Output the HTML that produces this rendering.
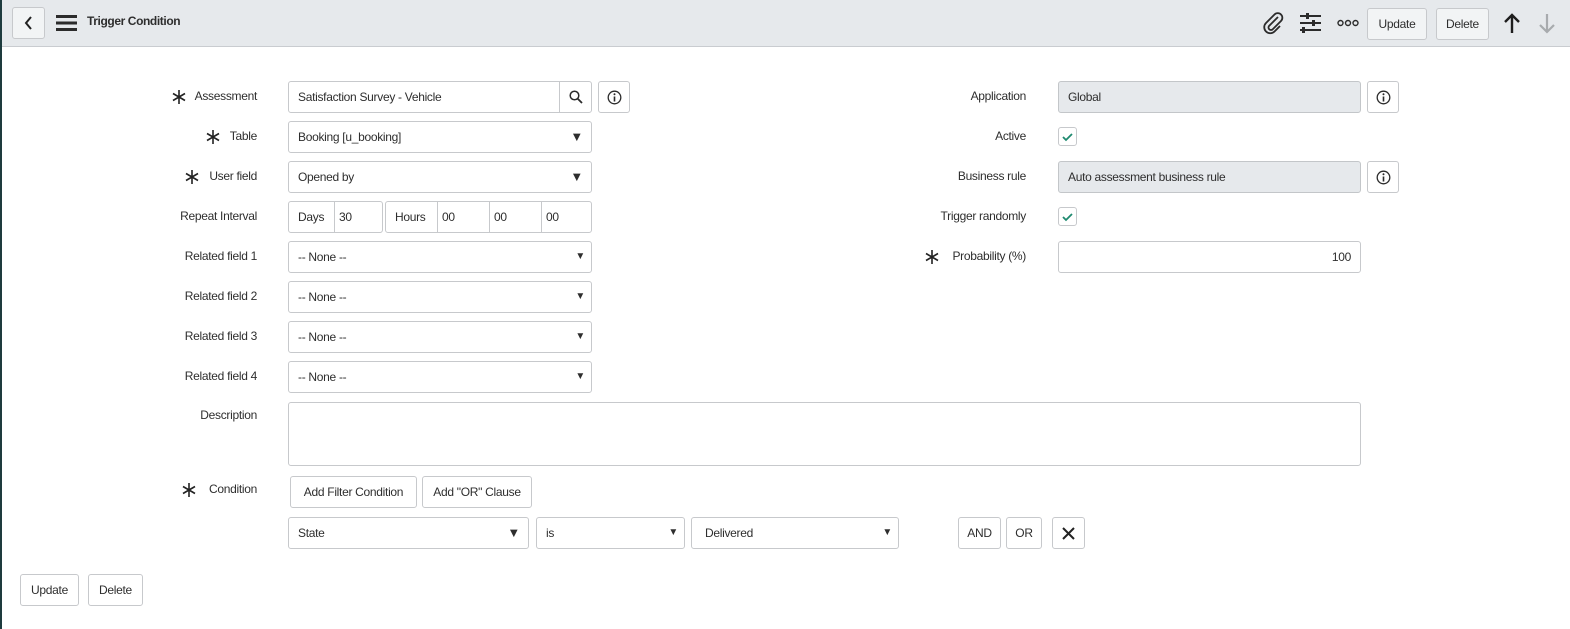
<!DOCTYPE html>
<html><head><meta charset="utf-8"><style>
*{box-sizing:border-box;margin:0;padding:0}
body{width:1570px;height:629px;background:#fff;font-family:"Liberation Sans",sans-serif;font-size:12px;color:#2e2e2e;position:relative;overflow:hidden;letter-spacing:-0.3px}
.a{position:absolute}
.hdr{left:0;top:0;width:1570px;height:47px;background:#e6e9ec;border-bottom:1px solid #c9ccd0}
.edge{left:0;top:0;width:2px;height:629px;background:#1e3b3e;z-index:5}
.box{position:absolute;border:1px solid #c7c9cc;border-radius:3px;background:#fff;height:32px;line-height:30px;padding-left:9px}
.ro{background:#e6e9ec;border-color:#c3c6c9}
.btn{position:absolute;border:1px solid #c7c9cc;border-radius:3px;background:#fff;height:32px;line-height:30px;text-align:center;color:#2e2e2e}
.hbtn{background:#f2f4f5}
.lbl,.lbl2{position:absolute;text-align:right;width:200px;height:32px;line-height:30px}
.star{position:absolute;width:14px;height:14px}
.arr{position:absolute;right:8px;top:0;font-size:13px}
.arrs{position:absolute;right:6px;top:0;font-size:10px}
.chk{position:absolute;width:19px;height:19px;border:1px solid #c7c9cc;border-radius:3px;background:#fff}
.seg{position:absolute;top:0;height:30px;border-left:1px solid #c7c9cc;padding-left:4px}
</style></head><body>
<svg width="0" height="0" style="position:absolute"><defs><symbol id="st" viewBox="0 0 14 14"><path d="M7 0v14M1 3.5l12 7M13 3.5l-12 7" stroke="#222" stroke-width="1.6"/></symbol></defs></svg>
<div class="a edge"></div>
<div class="a hdr"></div>
<div class="btn hbtn" style="left:12px;top:7px;width:33px;height:32px"><svg width="12" height="14" viewBox="0 0 12 14" style="margin-top:8px"><path d="M8 1L3 7l5 6" stroke="#222" stroke-width="2" fill="none"/></svg></div>
<svg class="a" style="left:56px;top:15px" width="21" height="16"><rect y="0" width="21" height="3" fill="#2b2b2b"/><rect y="6.5" width="21" height="3" fill="#2b2b2b"/><rect y="13" width="21" height="3" fill="#2b2b2b"/></svg>
<div class="a" style="left:87px;top:14px;font-weight:bold;font-size:12px;letter-spacing:-0.4px">Trigger Condition</div>
<svg class="a" style="left:1262px;top:11px" width="22" height="24" viewBox="0 0 22 24"><path d="M16 6L7 15a2.5 2.5 0 0 0 3.5 3.5L19 10a4.5 4.5 0 0 0-6.5-6.5L4 12a6 6 0 0 0 8.5 8.5L18 15" stroke="#2b2b2b" stroke-width="1.8" fill="none"/></svg>
<svg class="a" style="left:1300px;top:12px" width="21" height="22"><path d="M0 4h21M0 11h21M0 18h21" stroke="#2b2b2b" stroke-width="2"/><rect x="6" y="1" width="3" height="6" fill="#2b2b2b"/><rect x="12" y="8" width="3" height="6" fill="#2b2b2b"/><rect x="2" y="15" width="3" height="6" fill="#2b2b2b"/></svg>
<svg class="a" style="left:1337px;top:19px" width="22" height="8"><circle cx="3.5" cy="4" r="2.5" stroke="#2b2b2b" stroke-width="1.4" fill="none"/><circle cx="11" cy="4" r="2.5" stroke="#2b2b2b" stroke-width="1.4" fill="none"/><circle cx="18.5" cy="4" r="2.5" stroke="#2b2b2b" stroke-width="1.4" fill="none"/></svg>
<div class="btn hbtn" style="left:1367px;top:8px;width:60px">Update</div>
<div class="btn hbtn" style="left:1436px;top:8px;width:53px">Delete</div>
<svg class="a" style="left:1503px;top:13px" width="18" height="21"><path d="M9 20V2M2 9l7-7 7 7" stroke="#1e1e1e" stroke-width="2.4" fill="none"/></svg>
<svg class="a" style="left:1538px;top:13px" width="18" height="21"><path d="M9 1v18M2 12l7 7 7-7" stroke="#a8abae" stroke-width="2.2" fill="none"/></svg>

<svg class="star" style="left:172px;top:90px"><use href="#st"/></svg><div class="lbl" style="left:57px;top:81px">Assessment</div>
<svg class="star" style="left:206px;top:130px"><use href="#st"/></svg><div class="lbl" style="left:57px;top:121px">Table</div>
<svg class="star" style="left:185px;top:170px"><use href="#st"/></svg><div class="lbl" style="left:57px;top:161px">User field</div>
<div class="lbl" style="left:57px;top:201px">Repeat Interval</div>
<div class="lbl" style="left:57px;top:241px">Related field 1</div>
<div class="lbl" style="left:57px;top:281px">Related field 2</div>
<div class="lbl" style="left:57px;top:321px">Related field 3</div>
<div class="lbl" style="left:57px;top:361px">Related field 4</div>
<div class="lbl" style="left:57px;top:400px">Description</div>
<svg class="star" style="left:182px;top:483px"><use href="#st"/></svg><div class="lbl" style="left:57px;top:474px">Condition</div>

<div class="box" style="left:288px;top:81px;width:304px">Satisfaction Survey - Vehicle<div class="seg" style="left:270px;width:32px"><svg width="14" height="14" style="margin:8px 0 0 5px"><circle cx="5.5" cy="5.5" r="4.3" stroke="#2b2b2b" stroke-width="1.5" fill="none"/><path d="M8.5 8.5l4.5 4.5" stroke="#2b2b2b" stroke-width="1.8"/></svg></div></div>
<div class="btn" style="left:598px;top:81px;width:32px"><svg width="15" height="15" style="margin-top:8px"><circle cx="7.5" cy="7.5" r="6.3" stroke="#2b2b2b" stroke-width="1.3" fill="none"/><path d="M7.5 6.5v5" stroke="#2b2b2b" stroke-width="1.6"/><circle cx="7.5" cy="4.2" r="1" fill="#2b2b2b"/></svg></div>
<div class="box" style="left:288px;top:121px;width:304px">Booking [u_booking]<span class="arr">▼</span></div>
<div class="box" style="left:288px;top:161px;width:304px">Opened by<span class="arr">▼</span></div>
<div class="box" style="left:288px;top:201px;width:95px;padding:0">
<span style="position:absolute;left:9px">Days</span><div class="seg" style="left:45px;width:48px">30</div></div>
<div class="box" style="left:385px;top:201px;width:207px;padding:0">
<span style="position:absolute;left:9px">Hours</span><div class="seg" style="left:51px;width:52px">00</div><div class="seg" style="left:103px;width:52px">00</div><div class="seg" style="left:155px;width:50px">00</div></div>
<div class="box" style="left:288px;top:241px;width:304px">-- None --<span class="arrs">▼</span></div>
<div class="box" style="left:288px;top:281px;width:304px">-- None --<span class="arrs">▼</span></div>
<div class="box" style="left:288px;top:321px;width:304px">-- None --<span class="arrs">▼</span></div>
<div class="box" style="left:288px;top:361px;width:304px">-- None --<span class="arrs">▼</span></div>
<div class="box" style="left:288px;top:402px;width:1073px;height:64px"></div>

<div class="btn" style="left:290px;top:476px;width:127px">Add Filter Condition</div>
<div class="btn" style="left:422px;top:476px;width:110px">Add "OR" Clause</div>
<div class="box" style="left:288px;top:517px;width:241px">State<span class="arr">▼</span></div>
<div class="box" style="left:536px;top:517px;width:149px">is<span class="arrs">▼</span></div>
<div class="box" style="left:691px;top:517px;width:208px;padding-left:13px">Delivered<span class="arrs">▼</span></div>
<div class="btn" style="left:958px;top:517px;width:43px">AND</div>
<div class="btn" style="left:1006px;top:517px;width:36px">OR</div>
<div class="btn" style="left:1052px;top:517px;width:33px"><svg width="13" height="13" style="margin-top:9px"><path d="M1 1l11 11M12 1L1 12" stroke="#222" stroke-width="2"/></svg></div>

<div class="lbl2" style="left:826px;top:81px">Application</div>
<div class="lbl2" style="left:826px;top:121px">Active</div>
<div class="lbl2" style="left:826px;top:161px">Business rule</div>
<div class="lbl2" style="left:826px;top:201px">Trigger randomly</div>
<svg class="star" style="left:925px;top:250px"><use href="#st"/></svg><div class="lbl2" style="left:826px;top:241px">Probability (%)</div>
<div class="box ro" style="left:1058px;top:81px;width:303px">Global</div>
<div class="btn" style="left:1367px;top:81px;width:32px"><svg width="15" height="15" style="margin-top:8px"><circle cx="7.5" cy="7.5" r="6.3" stroke="#2b2b2b" stroke-width="1.3" fill="none"/><path d="M7.5 6.5v5" stroke="#2b2b2b" stroke-width="1.6"/><circle cx="7.5" cy="4.2" r="1" fill="#2b2b2b"/></svg></div>
<div class="chk" style="left:1058px;top:127px"><svg width="17" height="17"><path d="M4 9l3 3 6-6" stroke="#1f8a70" stroke-width="1.8" fill="none"/></svg></div>
<div class="box ro" style="left:1058px;top:161px;width:303px">Auto assessment business rule</div>
<div class="btn" style="left:1367px;top:161px;width:32px"><svg width="15" height="15" style="margin-top:8px"><circle cx="7.5" cy="7.5" r="6.3" stroke="#2b2b2b" stroke-width="1.3" fill="none"/><path d="M7.5 6.5v5" stroke="#2b2b2b" stroke-width="1.6"/><circle cx="7.5" cy="4.2" r="1" fill="#2b2b2b"/></svg></div>
<div class="chk" style="left:1058px;top:207px"><svg width="17" height="17"><path d="M4 9l3 3 6-6" stroke="#1f8a70" stroke-width="1.8" fill="none"/></svg></div>
<div class="box" style="left:1058px;top:241px;width:303px;text-align:right;padding-right:9px">100</div>

<div class="btn" style="left:20px;top:574px;width:59px">Update</div>
<div class="btn" style="left:88px;top:574px;width:55px">Delete</div>
</body></html>
